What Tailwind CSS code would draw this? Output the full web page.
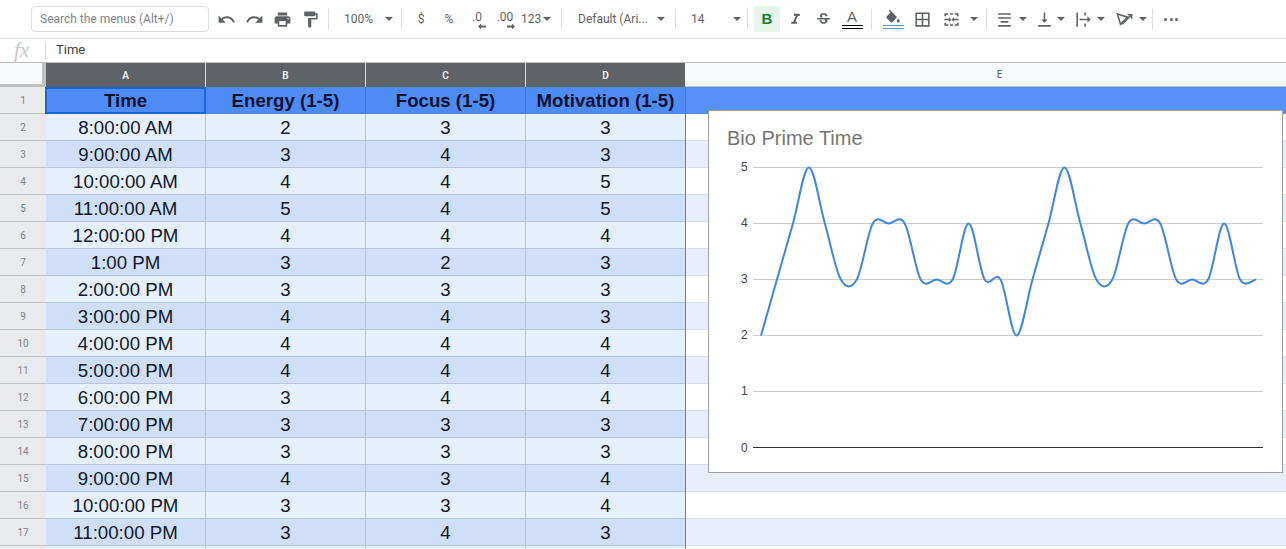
<!DOCTYPE html>
<html lang="en">
<head>
    <meta charset="UTF-8">
    <title>Bio Prime Time - Google Sheets</title>
    <script src="https://cdn.jsdelivr.net/npm/@tailwindcss/browser@4"></script>
</head>
<body class="bg-white overflow-hidden font-['Roboto',sans-serif]">
<div class="relative w-[1286px] h-[549px] overflow-hidden">

    <!-- Toolbar -->
    <div class="h-[39px] border-b border-[#dadce0] flex items-center text-[#5f6368] text-[12px] pl-[31px]">
        <div class="w-[178px] h-[26px] border border-[#dadce0] rounded-[4px] flex items-center pl-[8px] text-[#80868b] text-[12px]">Search the menus (Alt+/)</div>
        <button class="w-[28px] ml-[3px] flex justify-center"><svg class="w-[19px] h-[19px]" viewBox="0 0 24 24" fill="#5f6368"><path d="M12.5 8c-2.65 0-5.05.99-6.9 2.6L2 7v9h9l-3.62-3.62c1.39-1.16 3.16-1.88 5.12-1.88 3.54 0 6.55 2.31 7.6 5.5l2.37-.78C21.08 11.03 17.15 8 12.5 8z"/></svg></button>
        <button class="w-[28px] flex justify-center"><svg class="w-[19px] h-[19px]" viewBox="0 0 24 24" fill="#5f6368"><path d="M18.4 10.6C16.55 8.99 14.15 8 11.5 8c-4.65 0-8.58 3.03-9.96 7.22L3.9 16c1.05-3.19 4.05-5.5 7.6-5.5 1.95 0 3.73.72 5.12 1.88L13 16h9V7l-3.6 3.6z"/></svg></button>
        <button class="w-[28px] flex justify-center"><svg class="w-[19px] h-[19px]" viewBox="0 0 24 24" fill="#5f6368"><path d="M19 8H5c-1.66 0-3 1.34-3 3v6h4v4h12v-4h4v-6c0-1.66-1.34-3-3-3zm-3 11H8v-5h8v5zm3-7c-.55 0-1-.45-1-1s.45-1 1-1 1 .45 1 1-.45 1-1 1zm-1-9H6v4h12V3z"/></svg></button>
        <button class="w-[28px] flex justify-center"><svg class="w-[19px] h-[19px]" viewBox="0 0 24 24" fill="#5f6368"><path d="M18 4V3c0-.55-.45-1-1-1H5c-.55 0-1 .45-1 1v4c0 .55.45 1 1 1h12c.55 0 1-.45 1-1V6h1v4H9v11c0 .55.45 1 1 1h2c.55 0 1-.45 1-1v-9h8V4h-3z"/></svg></button>
        <div class="w-px h-[20px] bg-[#dadce0] ml-[4px]"></div>

        <div class="w-[29px] ml-[15px] text-center">100%</div>
        <div class="w-0 h-0 ml-[12px] border-x-[4px] border-x-transparent border-t-[4px] border-t-[#5f6368]"></div>
        <div class="w-px h-[20px] bg-[#dadce0] ml-[8px]"></div>

        <div class="w-[28px] ml-[5px] text-center">$</div>
        <div class="w-[28px] text-center">%</div>
        <div class="w-[28px] relative text-center"><span class="relative top-[-2px]">.0</span><svg class="absolute left-[15px] top-[13px] w-[8px] h-[7px]" viewBox="0 0 9 7" fill="#5f6368"><path d="M0 3.5 3.5 0v2.5H9v2H3.5V7z"/></svg></div>
        <div class="w-[28px] relative text-center"><span class="relative top-[-2px]">.00</span><svg class="absolute left-[16px] top-[13px] w-[8px] h-[7px]" viewBox="0 0 9 7" fill="#5f6368"><path d="M9 3.5 5.5 0v2.5H0v2h5.5V7z"/></svg></div>
        <div class="w-[20px] ml-[2px] text-center">123</div>
        <div class="w-0 h-0 ml-[2px] border-x-[4px] border-x-transparent border-t-[4px] border-t-[#5f6368]"></div>
        <div class="w-px h-[20px] bg-[#dadce0] ml-[10px]"></div>

        <div class="w-[72px] ml-[16px] whitespace-nowrap">Default (Ari...</div>
        <div class="w-0 h-0 ml-[7px] border-x-[4px] border-x-transparent border-t-[4px] border-t-[#5f6368]"></div>
        <div class="w-px h-[20px] bg-[#dadce0] ml-[10px]"></div>

        <div class="w-[14px] ml-[15px]">14</div>
        <div class="w-0 h-0 ml-[28px] border-x-[4px] border-x-transparent border-t-[4px] border-t-[#5f6368]"></div>
        <div class="w-px h-[20px] bg-[#dadce0] ml-[6px]"></div>

        <button class="w-[26px] h-[26px] ml-[6px] bg-[#e6f4ea] rounded-[2px] text-[#188038] text-[15px] font-bold font-['Liberation_Sans',sans-serif]">B</button>
        <button class="w-[28px] ml-[1px] flex justify-center"><svg class="w-[17px] h-[17px]" viewBox="0 0 24 24" fill="#5f6368"><path d="M10 4v3h2.21l-3.42 8H6v3h8v-3h-2.21l3.42-8H18V4z"/></svg></button>
        <button class="w-[29px] flex justify-center"><svg class="w-[17px] h-[17px]" viewBox="0 0 24 24" fill="#5f6368"><path d="M7.24 8.75c-.26-.48-.39-1.03-.39-1.67 0-.61.13-1.16.4-1.67.26-.5.63-.93 1.11-1.29.48-.35 1.05-.63 1.7-.83.66-.19 1.39-.29 2.18-.29.81 0 1.54.11 2.21.34.66.22 1.23.54 1.69.94.47.4.83.88 1.08 1.43.25.55.38 1.15.38 1.81h-3.01c0-.31-.05-.59-.15-.85-.09-.27-.24-.49-.44-.68-.2-.19-.45-.33-.75-.44-.3-.1-.66-.16-1.06-.16-.39 0-.74.04-1.03.13-.29.09-.53.21-.72.36-.19.16-.34.34-.44.55-.1.21-.15.43-.15.66 0 .48.25.88.74 1.21.38.25.77.48 1.41.7H7.39c-.05-.08-.11-.17-.15-.25zM21 12v-2H3v2h9.62c.18.07.4.14.55.2.37.17.66.34.87.51.21.17.35.36.43.57.07.2.11.43.11.69 0 .23-.05.45-.14.66-.09.2-.23.38-.42.53-.19.15-.42.26-.71.35-.29.08-.63.13-1.01.13-.43 0-.83-.04-1.18-.13s-.66-.23-.91-.42c-.25-.19-.45-.44-.59-.75-.14-.31-.25-.76-.25-1.21H6.4c0 .55.08 1.13.24 1.58.16.45.37.85.65 1.21.28.35.6.66.98.92.37.26.78.48 1.22.65.44.17.9.3 1.38.39.48.08.96.13 1.44.13.8 0 1.53-.09 2.18-.28s1.21-.45 1.67-.79c.46-.34.82-.77 1.07-1.27s.38-1.07.38-1.71c0-.6-.1-1.14-.31-1.61-.05-.11-.11-.23-.17-.33H21z"/></svg></button>
        <button class="w-[28px] flex flex-col items-center"><span class="text-[15px] leading-[15px] text-[#5f6368] font-['Liberation_Sans',sans-serif]">A</span><span class="w-[21px] h-[4px] border-y border-black mt-[1px]"></span></button>
        <div class="w-px h-[20px] bg-[#dadce0] ml-[5px]"></div>

        <button class="w-[28px] ml-[7px] flex flex-col items-center"><svg class="w-[18px] h-[15px]" viewBox="0 0 24 18" fill="#5f6368"><path d="M16.56 8.94L7.62 0 6.21 1.41l2.38 2.38-5.15 5.15c-.59.59-.59 1.54 0 2.12l5.5 5.5c.29.29.68.44 1.06.44s.77-.15 1.06-.44l5.5-5.5c.59-.58.59-1.53 0-2.12zM19 11.5s-2 2.17-2 3.5c0 1.1.9 2 2 2s2-.9 2-2c0-1.33-2-3.5-2-3.5z"/></svg><span class="w-[21px] h-[4px] border-y border-[#5f98c4] mt-[1px]"></span></button>
        <button class="w-[30px] flex justify-center"><svg class="w-[19px] h-[19px]" viewBox="0 0 24 24" fill="#5f6368"><path d="M3 3v18h18V3H3zm8 16H5v-6h6v6zm0-8H5V5h6v6zm8 8h-6v-6h6v6zm0-8h-6V5h6v6z"/></svg></button>
        <button class="w-[28px] flex justify-center"><svg class="w-[19px] h-[19px]" viewBox="0 0 24 24" fill="#5f6368"><path d="M3 4h5v2H5v2H3zM16 4h5v4h-2V6h-3zM3 16h2v2h3v2H3zM19 16h2v4h-5v-2h3zM10 4h4v2h-4zM10 18h4v2h-4zM3 11h6V9l3 3-3 3v-2H3zM21 11h-6V9l-3 3 3 3v-2h6z"/></svg></button>
        <div class="w-0 h-0 ml-[5px] border-x-[4px] border-x-transparent border-t-[4px] border-t-[#5f6368]"></div>
        <div class="w-px h-[20px] bg-[#dadce0] ml-[8px]"></div>

        <button class="w-[19px] ml-[8px] flex justify-center"><svg class="w-[19px] h-[19px]" viewBox="0 0 24 24" fill="#5f6368"><path d="M4 4h16v2H4zM4 9h16v2H4zM7 14h10v2H7zM4 19h16v2H4z"/></svg></button>
        <div class="w-0 h-0 ml-[5px] border-x-[4px] border-x-transparent border-t-[4px] border-t-[#5f6368]"></div>
        <button class="w-[19px] ml-[8px] flex justify-center"><svg class="w-[19px] h-[19px]" viewBox="0 0 24 24" fill="#5f6368"><path d="M16 12h-3V3h-2v9H8l4 4zM4 19v2h16v-2z"/></svg></button>
        <div class="w-0 h-0 ml-[3px] border-x-[4px] border-x-transparent border-t-[4px] border-t-[#5f6368]"></div>
        <button class="w-[19px] ml-[9px] flex justify-center"><svg class="w-[19px] h-[19px]" viewBox="0 0 24 24" fill="#5f6368"><path d="M3 3h2v18H3zM13 3h2v4h-2zM13 17h2v4h-2zM7 11h10V8l4 4-4 4v-3H7z"/></svg></button>
        <div class="w-0 h-0 ml-[4px] border-x-[4px] border-x-transparent border-t-[4px] border-t-[#5f6368]"></div>
        <button class="w-[19px] ml-[10px] flex justify-center"><svg class="w-[19px] h-[19px]" viewBox="0 0 24 24" fill="none" stroke="#5f6368" stroke-width="2"><path d="M3 5l13 4L7 18zM9 18L20 7M16 6h5v5"/></svg></button>
        <div class="w-0 h-0 ml-[5px] border-x-[4px] border-x-transparent border-t-[4px] border-t-[#5f6368]"></div>
        <div class="w-px h-[20px] bg-[#dadce0] ml-[5px]"></div>

        <button class="w-[14px] ml-[11px] flex justify-between"><span class="w-[3px] h-[3px] rounded-full bg-[#5f6368]"></span><span class="w-[3px] h-[3px] rounded-full bg-[#5f6368]"></span><span class="w-[3px] h-[3px] rounded-full bg-[#5f6368]"></span></button>
    </div>

    <!-- Formula bar -->
    <div class="h-[24px] border-b border-[#c0c0c0] flex items-center">
        <div class="w-[46px] pl-[14px] text-[#c4c7c5] text-[21px] italic font-['Liberation_Serif',serif] border-r border-[#dadce0] h-[18px] leading-[16px]">fx</div>
        <div class="pl-[10px] text-[13px] text-[#3c4043] relative top-[-1px]">Time</div>
    </div>

    <!-- Column headers -->
    <div class="grid grid-cols-[46px_160px_160px_160px_159px_629px] h-[24px] text-[10px]">
        <div class="bg-[#f8f9fa] border-r-[4px] border-b-[3px] border-[#c0c0c0]"></div>
        <div class="bg-[#5f6368] text-white font-medium flex items-center justify-center border-r border-[#dadce0]">A</div>
        <div class="bg-[#5f6368] text-white font-medium flex items-center justify-center border-r border-[#dadce0]">B</div>
        <div class="bg-[#5f6368] text-white font-medium flex items-center justify-center border-r border-[#dadce0]">C</div>
        <div class="bg-[#5f6368] text-white font-medium flex items-center justify-center">D</div>
        <div class="bg-[#f8f9fa] text-[#5f6368] flex items-center justify-center border-b border-[#c0c0c0]">E</div>
    </div>

    <!-- Rows -->
    <div id="rows"></div>

    <!-- Embedded chart -->
    <div class="absolute left-[708px] top-[110px] w-[575px] h-[363px] bg-white border border-[#9e9e9e]">
        <div class="absolute left-[18px] top-[15px] text-[20px] leading-[24px] text-[#757575] font-['Liberation_Sans',sans-serif]">Bio Prime Time</div>
        <svg class="absolute left-0 top-0" width="573" height="361" viewBox="709 111 573 361" font-family="Liberation Sans" font-size="12" fill="#444444">
            <g stroke="#cccccc" stroke-width="1">
                <line x1="753" x2="1263" y1="167.5" y2="167.5"/>
                <line x1="753" x2="1263" y1="223.5" y2="223.5"/>
                <line x1="753" x2="1263" y1="279.5" y2="279.5"/>
                <line x1="753" x2="1263" y1="335.5" y2="335.5"/>
                <line x1="753" x2="1263" y1="391.5" y2="391.5"/>
                <line x1="753" x2="1263" y1="447.5" y2="447.5" stroke="#333333"/>
            </g>
            <text x="741" y="171">5</text>
            <text x="741" y="227">4</text>
            <text x="741" y="283">3</text>
            <text x="741" y="339">2</text>
            <text x="741" y="395">1</text>
            <text x="741" y="452">0</text>
            <path id="line" fill="none" stroke="#3b86e6" stroke-width="2"/>
        </svg>
    </div>

    <!-- Freeze line -->
    <div class="absolute left-[685px] top-[114px] w-px h-[435px] bg-[#00b3a4]"></div>
    <!-- Selected cell -->
    <div class="absolute left-[45px] top-[87px] w-[161px] h-[27px] border-2 border-[#1a66d6]"></div>
</div>

<script>
    const data = [
        ['8:00:00 AM', 2, 3, 3], ['9:00:00 AM', 3, 4, 3], ['10:00:00 AM', 4, 4, 5], ['11:00:00 AM', 5, 4, 5],
        ['12:00:00 PM', 4, 4, 4], ['1:00 PM', 3, 2, 3], ['2:00:00 PM', 3, 3, 3], ['3:00:00 PM', 4, 4, 3],
        ['4:00:00 PM', 4, 4, 4], ['5:00:00 PM', 4, 4, 4], ['6:00:00 PM', 3, 4, 4], ['7:00:00 PM', 3, 3, 3],
        ['8:00:00 PM', 3, 3, 3], ['9:00:00 PM', 4, 3, 4], ['10:00:00 PM', 3, 3, 4], ['11:00:00 PM', 3, 4, 3]
    ];
    const cell = 'w-[160px] pt-[2px] border-r border-b border-[#b7c4d9] flex items-center justify-center text-[18.67px] text-[#111827]';

    let html = `
        <div class="flex h-[27px] font-['Liberation_Sans',sans-serif]">
            <div class="w-[46px] bg-[#e8eaed] border-b border-[#c0c0c0] flex items-center justify-center text-[10px] text-[#80868b] font-['Roboto',sans-serif]">1</div>
            ${['Time', 'Energy (1-5)', 'Focus (1-5)', 'Motivation (1-5)'].map(h => `<div class="w-[160px] bg-[#4f8bf5] border-r border-[#3f78d8] flex items-center justify-center text-[18.67px] font-bold text-[#0b1230]">${h}</div>`).join('')}
            <div class="flex-1 bg-[#5591f7]"></div>
        </div>`;

    data.concat([['', '', '', '']]).forEach((row, i) => {
        const light = i % 2 === 0;
        // row 18 only peeks in at the bottom edge, so its number stays out
        const label = i < data.length ? i + 2 : '';
        html += `
        <div class="flex h-[27px] font-['Liberation_Sans',sans-serif]">
            <div class="w-[46px] bg-[#e8eaed] border-b border-[#c0c0c0] flex items-center justify-center text-[10px] text-[#80868b] font-['Roboto',sans-serif]">${label}</div>
            ${row.map(v => `<div class="${cell} ${light ? 'bg-[#e6f0fd]' : 'bg-[#cfdff8]'}">${v}</div>`).join('')}
            <div class="flex-1 border-b border-[#d9dfe8] ${light ? 'bg-white' : 'bg-[#e8eefb]'}"></div>
        </div>`;
    });
    document.getElementById('rows').innerHTML = html;

    // Energy column plotted twice, smoothed like the sheet's chart
    const energy = data.map(r => r[1]);
    const series = energy.concat(energy);
    const pts = series.map((v, i) => [761 + i * 15.97, 447.5 - v * 56]);
    let d = `M${pts[0][0]} ${pts[0][1]}`;
    for (let i = 0; i < pts.length - 1; i++) {
        const a = pts[i - 1] || pts[i], b = pts[i], c = pts[i + 1], e = pts[i + 2] || c;
        d += `C${b[0] + (c[0] - a[0]) / 6} ${b[1] + (c[1] - a[1]) / 6} ${c[0] - (e[0] - b[0]) / 6} ${c[1] - (e[1] - b[1]) / 6} ${c[0]} ${c[1]}`;
    }
    document.getElementById('line').setAttribute('d', d);
</script>
</body>
</html>
